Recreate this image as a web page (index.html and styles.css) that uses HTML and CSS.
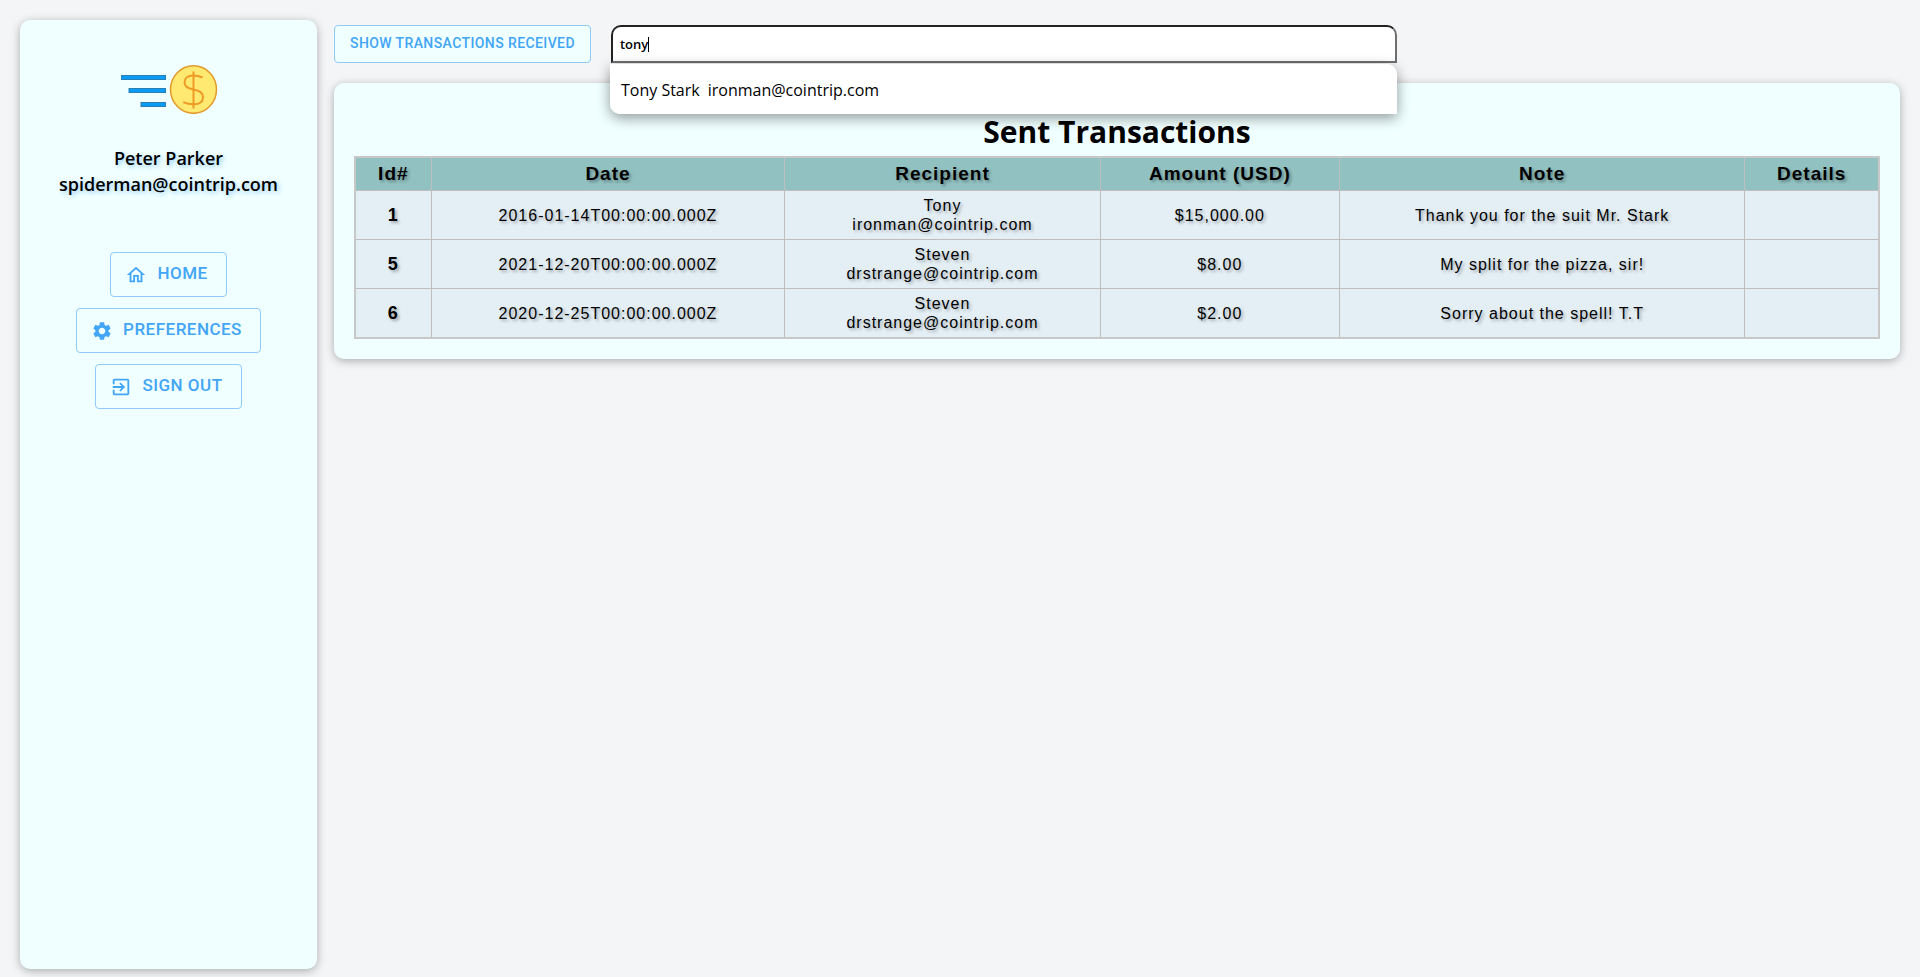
FILE: index.html
```
<!DOCTYPE html>
<html lang="en">
<head>
<meta charset="utf-8">
<title>CoinTrip</title>
<link rel="stylesheet" href="styles.css">
</head>
<body>
<aside class="sidebar">
  <svg class="logo" viewBox="0 0 100 50" role="img" aria-label="CoinTrip">
    <g fill="#0a9cf5" stroke="#2c7fb3" stroke-width="1">
      <rect x="2.500" y="11.500" width="44" height="4"/>
      <rect x="10" y="24.500" width="36.500" height="4"/>
      <rect x="22" y="38.500" width="24.500" height="4"/>
    </g>
    <ellipse cx="74.500" cy="25.500" rx="23" ry="23.800" fill="#ffe970" stroke="#e39a2d" stroke-width="1.500"/>
    <g fill="none" stroke="#ee9a26" stroke-width="2">
      <path d="M83.500 13.500C80 11.800 77 11.500 74 11.500C68.500 11.500 65.500 14.500 65.500 18.500C65.500 23 69.500 24.600 74.500 25.500C80 26.500 84 28.500 84 33C84 38 80 40.300 74.500 40.300C71 40.300 67.500 39.800 64.300 38.200"/>
      <path d="M74.500 7.500V44.500"/>
    </g>
  </svg>
  <div class="profile">
    <div>Peter Parker</div>
    <div>spiderman@cointrip.com</div>
  </div>
  <nav class="menu">
    <button class="btn menu-btn" type="button">
      <svg class="icon" viewBox="0 0 24 24" aria-hidden="true"><path d="m12 5.690 5 4.500V18h-2v-6H9v6H7v-7.810l5-4.500M12 3 2 12h3v8h6v-6h2v6h6v-8h3L12 3z"/></svg>
      <span class="menu-label">HOME</span>
    </button>
    <button class="btn menu-btn" type="button">
      <svg class="icon" viewBox="0 0 24 24" aria-hidden="true"><path d="M19.140 12.940c.04-.3.06-.61.06-.94 0-.32-.02-.64-.07-.94l2.030-1.580c.18-.14.23-.41.12-.61l-1.920-3.320c-.12-.22-.37-.29-.59-.22l-2.390.96c-.5-.38-1.030-.7-1.620-.94l-.36-2.540c-.04-.24-.24-.41-.48-.41h-3.840c-.24 0-.43.17-.47.41l-.36 2.540c-.59.24-1.130.57-1.620.94l-2.390-.96c-.22-.08-.47 0-.59.22L2.740 8.870c-.12.21-.08.47.12.61l2.030 1.580c-.05.3-.09.63-.09.94s.02.64.07.94l-2.030 1.580c-.18.14-.23.41-.12.61l1.920 3.320c.12.22.37.29.59.22l2.390-.96c.5.38 1.030.7 1.620.94l.36 2.540c.05.24.24.41.48.41h3.840c.24 0 .44-.17.47-.41l.36-2.540c.59-.24 1.130-.56 1.620-.94l2.390.96c.22.08.47 0 .59-.22l1.920-3.320c.12-.22.07-.47-.12-.61l-2.010-1.580zM12 15.600c-1.980 0-3.600-1.620-3.600-3.600s1.620-3.600 3.600-3.600 3.600 1.620 3.600 3.600-1.620 3.600-3.600 3.600z"/></svg>
      <span class="menu-label">PREFERENCES</span>
    </button>
    <button class="btn menu-btn" type="button">
      <svg class="icon" viewBox="0 0 24 24" aria-hidden="true"><path d="M10.090 15.590 11.500 17l5-5-5-5-1.410 1.410L12.670 11H3v2h9.670l-2.580 2.590zM19 3H5c-1.110 0-2 .9-2 2v4h2V5h14v14H5v-4H3v4c0 1.100.89 2 2 2h14c1.100 0 2-.9 2-2V5c0-1.100-.9-2-2-2z"/></svg>
      <span class="menu-label">SIGN OUT</span>
    </button>
  </nav>
</aside>
<main class="main">
  <div class="toolbar">
    <button class="btn toggle-btn" type="button">SHOW TRANSACTIONS RECEIVED</button>
    <div class="search">
      <input class="search-input" type="text" aria-label="Search users" value="tony">
      <i class="caret"></i>
      <a class="result" href="#"><span>Tony Stark</span><span>ironman@cointrip.com</span></a>
    </div>
  </div>
  <section class="card">
    <h1 class="title">Sent Transactions</h1>
    <table class="table">
      <colgroup><col class="c-id"><col class="c-date"><col class="c-to"><col class="c-amount"><col class="c-note"><col class="c-details"></colgroup>
      <thead>
        <tr><th scope="col">Id#</th><th scope="col">Date</th><th scope="col">Recipient</th><th scope="col">Amount (USD)</th><th scope="col">Note</th><th scope="col">Details</th></tr>
      </thead>
      <tbody>
        <tr><th scope="row">1</th><td>2016-01-14T00:00:00.000Z</td><td>Tony<br>ironman@cointrip.com</td><td>$15,000.00</td><td>Thank you for the suit Mr. Stark</td><td></td></tr>
        <tr><th scope="row">5</th><td>2021-12-20T00:00:00.000Z</td><td>Steven<br>drstrange@cointrip.com</td><td>$8.00</td><td>My split for the pizza, sir!</td><td></td></tr>
        <tr><th scope="row">6</th><td>2020-12-25T00:00:00.000Z</td><td>Steven<br>drstrange@cointrip.com</td><td>$2.00</td><td>Sorry about the spell! T.T</td><td></td></tr>
      </tbody>
    </table>
  </section>
</main>
</body>
</html>
```
FILE: styles.css
```
* {
  box-sizing: border-box;
}

body {
  margin: 0;
  min-height: 100vh;
  padding: 20px 20px 8px;
  display: flex;
  gap: 17px;
  background: #f4f5f7;
  color: #000;
  font-family: "Open Sans", "Noto Sans", sans-serif;
}

.sidebar {
  flex: 0 0 297px;
  padding: 44px 16px;
  display: flex;
  flex-direction: column;
  align-items: center;
  background: #f0ffff;
  border-radius: 10px;
  box-shadow: 0 2px 10px rgba(0, 0, 0, 0.3);
}

.logo {
  width: 100px;
  height: 50px;
}

.profile {
  margin-top: 31px;
  font-size: 18px;
  font-weight: 600;
  line-height: 26px;
  text-align: center;
  text-shadow: 2px 2px 4px rgba(30, 136, 229, 0.4);
}

.menu {
  margin-top: 55px;
  display: flex;
  flex-direction: column;
  align-items: center;
  gap: 11px;
}

.btn {
  border: 1px solid #90caf9;
  border-radius: 4px;
  background: #f0ffff;
  color: #42a5f5;
  font-family: Roboto, sans-serif;
  font-weight: 500;
  letter-spacing: 0.02857em;
}

.menu-btn {
  height: 45px;
  padding: 0 18px 0 14px;
  display: flex;
  align-items: center;
  gap: 10px;
  font-size: 17px;
}

.menu-label {
  padding-bottom: 3px;
}

.icon {
  width: 22px;
  height: 22px;
  fill: currentColor;
}

.main {
  flex: 1;
  min-width: 0;
}

.toolbar {
  padding-top: 5px;
  display: flex;
  gap: 19px;
}

.toggle-btn {
  height: 38px;
  padding: 0 15px 2px;
  font-size: 14px;
}

.search {
  position: relative;
  width: 50.25%;
  padding-left: 1px;
}

.search-input {
  width: 100%;
  height: 38px;
  padding: 0 7px;
  display: block;
  border: 2px solid;
  border-color: #222 #6f6f6f #6f6f6f #222;
  border-radius: 10px 10px 0 0;
  outline: none;
  background: #fff;
  font-family: inherit;
  font-size: 13px;
  font-weight: 600;
}

.caret {
  position: absolute;
  top: 12px;
  left: 38px;
  width: 1px;
  height: 15px;
  background: #000;
}

.result {
  position: absolute;
  top: 39px;
  left: 0;
  right: 0;
  padding: 14px 11px 12px;
  display: flex;
  gap: 8px;
  border-radius: 0 10px 0 10px;
  background: rgba(255, 255, 255, 0.96);
  box-shadow: 0 4px 14px rgba(0, 0, 0, 0.4);
  color: #000;
  font-size: 16px;
  line-height: 24px;
  text-decoration: none;
}

.card {
  margin-top: 20px;
  padding: 20px;
  background: #f0ffff;
  border-radius: 10px;
  box-shadow: 0 2px 10px rgba(0, 0, 0, 0.3);
}

.title {
  margin: 7px 0 2px;
  font-size: 30px;
  line-height: 44px;
  text-align: center;
}

.table {
  width: 100%;
  border: 2px solid #c8c8c8;
  border-collapse: collapse;
  font-family: "Liberation Sans", Arial, sans-serif;
  font-size: 16px;
  line-height: 19px;
  letter-spacing: 1px;
  text-align: center;
  text-shadow: 2px 2px 3px rgba(0, 0, 0, 0.3);
}

.table th,
.table td {
  padding: 5px;
  border: 1px solid #bebebe;
}

.table td,
.table tbody th {
  background: #e4eff5;
}

.table tbody th {
  font-size: 18px;
}

.table thead th {
  padding: 4px 5px;
  background: #91c1c1;
  font-size: 19px;
  line-height: 24px;
}

.c-id { width: 5%; }
.c-date { width: 23.2%; }
.c-to { width: 20.7%; }
.c-amount { width: 15.7%; }
.c-note { width: 26.6%; }
.c-details { width: 8.8%; }
```
